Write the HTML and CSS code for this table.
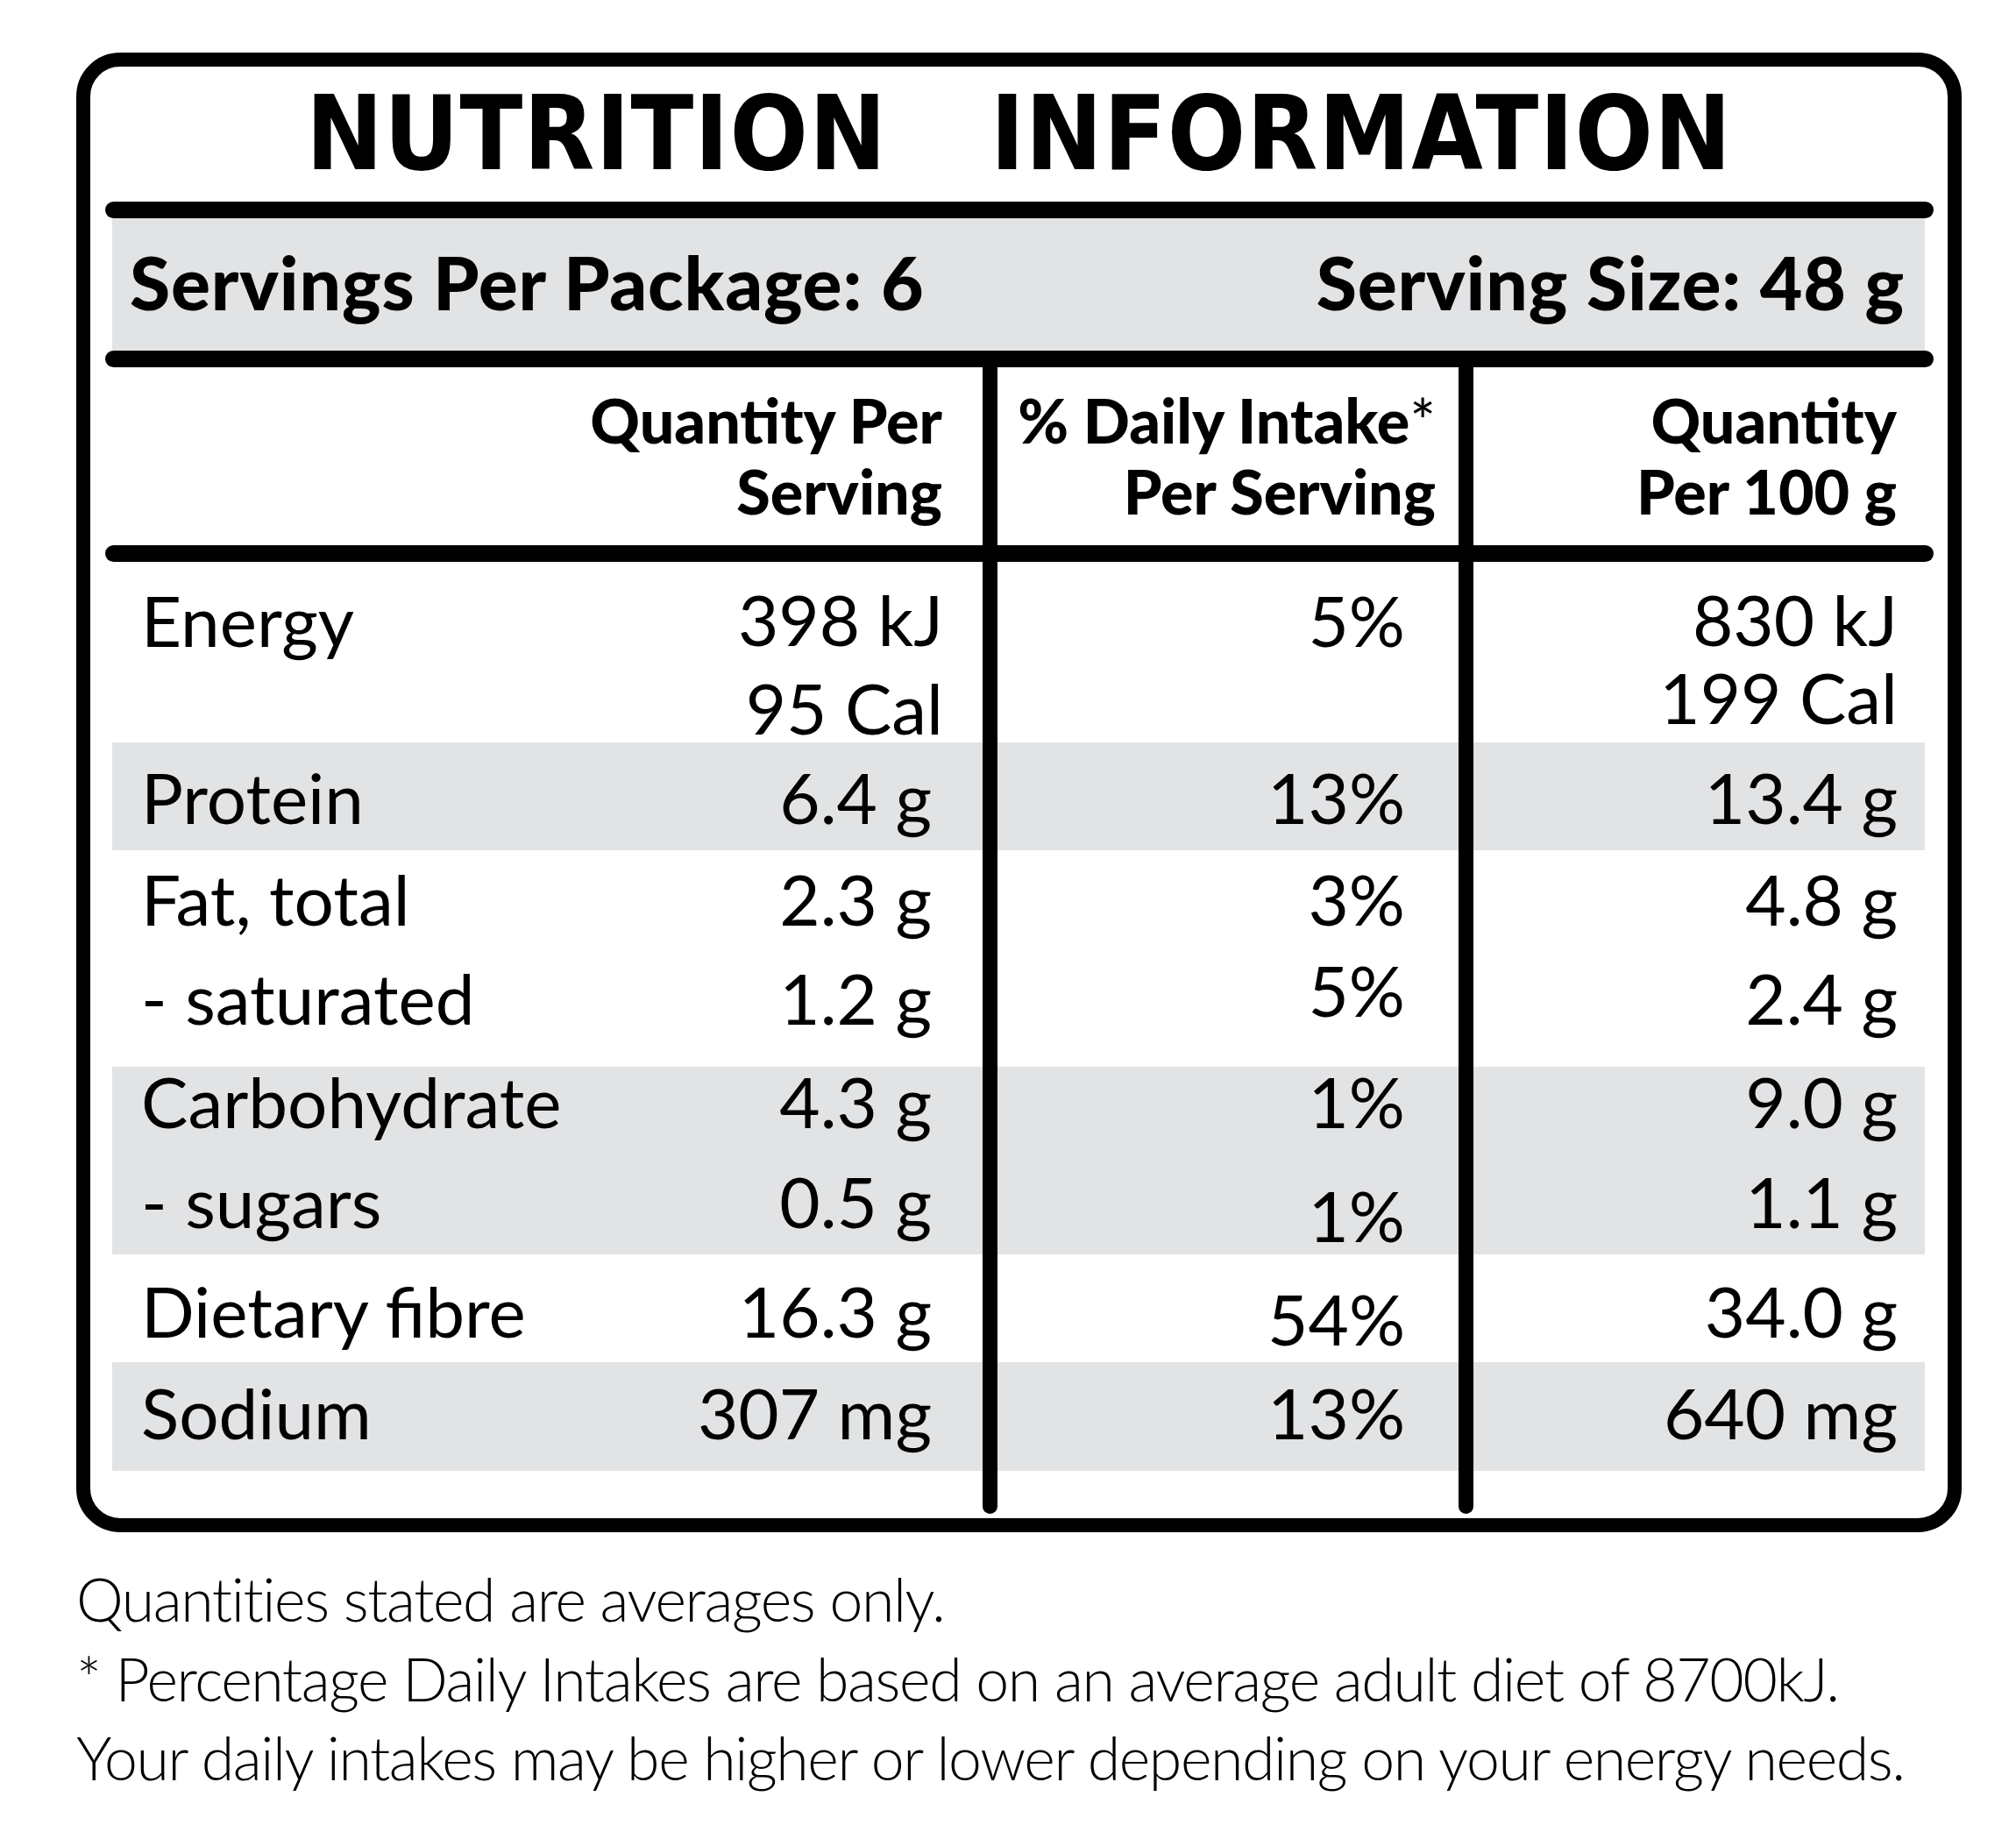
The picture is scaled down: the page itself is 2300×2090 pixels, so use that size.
FILE: index.html
```html
<!DOCTYPE html>
<html lang="en">
<head>
<meta charset="utf-8">
<title>Nutrition Information</title>
<link rel="stylesheet" href="styles.css">
</head>
<body>
<div class="page">
  <section class="panel">
    <h1 class="title">NUTRITION INFORMATION</h1>
    <div class="rule"></div>
    <div class="servings"><span>Servings Per Package: 6</span><span>Serving Size: 48 g</span></div>
    <div class="rule"></div>
    <div class="row head">
      <div class="c-label"></div>
      <div class="c-q">Quantity Per<br>Serving</div>
      <div class="c-di">% Daily Intake<span class="ast">*</span><br>Per Serving</div>
      <div class="c-100">Quantity<br>Per 100 g</div>
    </div>
    <div class="rule"></div>
    <div class="row data energy">
      <div class="c-label">Energy</div>
      <div class="c-q">398 kJ<br>95 Cal</div>
      <div class="c-di">5%</div>
      <div class="c-100">830 kJ<br>199 Cal</div>
    </div>
    <div class="row data band protein">
      <div class="c-label">Protein</div>
      <div class="c-q">6.4 g</div>
      <div class="c-di">13%</div>
      <div class="c-100">13.4 g</div>
    </div>
    <div class="row data fat">
      <div class="c-label">Fat, total</div>
      <div class="c-q">2.3 g</div>
      <div class="c-di">3%</div>
      <div class="c-100">4.8 g</div>
    </div>
    <div class="row data sat">
      <div class="c-label">- saturated</div>
      <div class="c-q">1.2 g</div>
      <div class="c-di">5%</div>
      <div class="c-100">2.4 g</div>
    </div>
    <div class="row data band carb">
      <div class="c-label">Carbohydrate</div>
      <div class="c-q">4.3 g</div>
      <div class="c-di">1%</div>
      <div class="c-100">9.0 g</div>
    </div>
    <div class="row data band sugars">
      <div class="c-label">- sugars</div>
      <div class="c-q">0.5 g</div>
      <div class="c-di">1%</div>
      <div class="c-100">1.1 g</div>
    </div>
    <div class="row data fibre">
      <div class="c-label">Dietary fibre</div>
      <div class="c-q">16.3 g</div>
      <div class="c-di">54%</div>
      <div class="c-100">34.0 g</div>
    </div>
    <div class="row data band sodium">
      <div class="c-label">Sodium</div>
      <div class="c-q">307 mg</div>
      <div class="c-di">13%</div>
      <div class="c-100">640 mg</div>
    </div>
    <div class="row end">
      <div></div>
      <div></div>
      <div class="c-di"><i class="stub"></i></div>
      <div class="c-100"><i class="stub"></i></div>
    </div>
  </section>
  <div class="notes">
    <p>Quantities stated are averages only.</p>
    <p>* Percentage Daily Intakes are based on an average adult diet of 8700kJ.</p>
    <p>Your daily intakes may be higher or lower depending on your energy needs.</p>
  </div>
</div>
</body>
</html>
```
FILE: styles.css
```css
*, *::before, *::after { box-sizing: border-box; }

body {
  margin: 0;
  background: #fff;
  color: #000;
  font-family: Lato, "Noto Sans", sans-serif;
}

.page {
  padding: 60px 0 0 87px;
}

.panel {
  width: 2151px;
  height: 1688px;
  border: 16px solid #000;
  border-radius: 50px;
}

.title {
  margin: 0;
  height: 154px;
  line-height: 154px;
  text-align: center;
  font-family: "DejaVu Sans Condensed", "DejaVu Sans", sans-serif;
  font-stretch: condensed;
  font-weight: 700;
  font-size: 117px;
  letter-spacing: 1px;
  word-spacing: 80px;
  white-space: nowrap;
}

.rule {
  height: 19px;
  margin: 0 16px 0 17px;
  background: #000;
  border-radius: 10px;
}

.servings {
  display: flex;
  justify-content: space-between;
  height: 151px;
  margin: 0 26px 0 25px;
  padding: 0 23px 5px 20px;
  background: #e2e3e5;
  font-weight: 900;
  font-size: 84px;
  letter-spacing: 0.8px;
  line-height: 146px;
  white-space: nowrap;
}

/* table rows */
.row {
  display: grid;
  grid-template-columns: 480px 513px 543px 532px;
  margin: 0 26px 0 25px;
}

.row > div {
  white-space: nowrap;
  padding-top: var(--pt, 0px);
}

.row > .c-di {
  padding-top: var(--pt2, var(--pt, 0px));
}

.c-di, .c-100 {
  border-left: 17px solid #000;
}

.c-q, .c-di, .c-100 {
  text-align: right;
}

.c-label { padding-left: 33px; }
.c-q { padding-right: 58px; }
.c-di { padding-right: 61px; }
.c-100 { padding-right: 31px; }

.band { background: #e2e3e5; }

/* header row */
.head {
  height: 203px;
  --pt: 20px;
  font-weight: 900;
  font-size: 70px;
  line-height: 81px;
}
.head .c-q { padding-right: 46px; }
.head .c-di { padding-right: 26px; }
.head .c-100 { padding-right: 32px; }
.ast { font-weight: 400; }

/* data rows */
.data {
  font-weight: 400;
  font-size: 80px;
  line-height: 60px;
}

.energy { height: 206px; --pt: 36px; }
.energy .c-q { line-height: 101px; padding-top: 15px; padding-right: 45px; }
.energy .c-100 { line-height: 89px; padding-top: 21px; }

.protein { height: 123px; --pt: 32px; }
.fat { height: 124px; --pt: 25px; }
.sat { height: 123px; --pt: 14px; --pt2: 5px; }
.carb { height: 107px; --pt: 9px; }
.sugars { height: 107px; --pt: 16px; --pt2: 32px; }
.fibre { height: 123px; --pt: 34px; --pt2: 43px; }
.sodium { height: 124px; --pt: 27px; }

/* bottom ends of the column rules */
.end { height: 54px; }
.end .c-di, .end .c-100 { border-left: 0; padding: 0; }
.stub {
  display: block;
  width: 17px;
  height: 49px;
  background: #000;
  border-radius: 0 0 9px 9px;
}

/* footnotes */
.notes {
  margin-top: 31px;
  font-weight: 300;
  font-size: 68px;
  line-height: 90.5px;
  letter-spacing: -1.4px;
}
.notes p {
  margin: 0;
  white-space: nowrap;
}
```
